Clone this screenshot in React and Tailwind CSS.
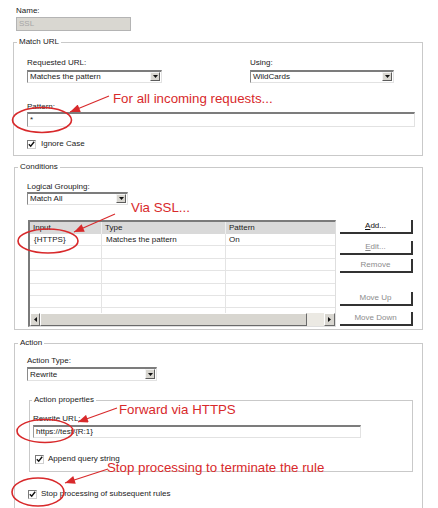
import React from "react";

const RED = "#d8292b";

const Label = ({ children, className = "" }) => (
  <div className={`leading-[10px] whitespace-nowrap ${className}`}>{children}</div>
);

const Select = ({ value, className = "" }) => (
  <div
    className={`flex items-stretch border-t-2 border-l border-t-[#7c7c7c] border-l-[#8a8a8a] border-r border-b border-r-[#e2e2e2] border-b-[#e2e2e2] bg-white ${className}`}
  >
    <div className="flex flex-1 items-center pl-[2px] leading-none whitespace-nowrap">{value}</div>
    <div className="mr-[1px] mb-[1px] flex w-[10px] items-center justify-center border border-t-[#f4f4f4] border-l-[#f4f4f4] border-b-[#5c5c5c] border-r-[#5c5c5c] bg-[#d8d6d0]">
      <svg width="5" height="3" viewBox="0 0 5 3">
        <path d="M0 0h5L2.5 3z" fill="#111" />
      </svg>
    </div>
  </div>
);

const Check = () => (
  <div className="flex h-[9px] w-[9px] items-center justify-center border border-t-[#7a7a7a] border-l-[#7a7a7a] border-b-[#cfcfcf] border-r-[#cfcfcf] bg-white">
    <svg width="7" height="7" viewBox="0 0 7 7">
      <path d="M0.8 3.2l1.9 2 3.5-4.4" stroke="#111" strokeWidth="1.4" fill="none" />
    </svg>
  </div>
);

const Btn = ({ children, dim, className = "" }) => (
  <div
    className={`flex h-[14px] w-[73px] items-center justify-center border-r-2 border-b-2 border-r-[#333] border-b-[#333] bg-white leading-none ${
      dim ? "text-[#8c8c8c]" : "text-[#111]"
    } ${className}`}
  >
    {children}
  </div>
);

const rows = [["{HTTPS}", "Matches the pattern", "On"], [], [], [], [], [], []];

const Table = () => (
  <div className="ml-[13px] flex h-[107px] w-[308px] flex-col border-t-2 border-l-2 border-t-[#7a7a7a] border-l-[#7a7a7a] border-r border-b border-r-[#dedede] border-b-[#dedede] bg-white">
    <div className="flex h-[12px] shrink-0 bg-[#d9d9d9] leading-[12px]">
      <div className="w-[72px] border-r border-[#efefef] pl-[3px]">Input</div>
      <div className="w-[124px] border-r border-[#efefef] pl-[3px]">Type</div>
      <div className="flex-1 pl-[3px]">Pattern</div>
    </div>
    <div className="flex-1 overflow-hidden">
      {rows.map((r, i) => (
        <div key={i} className="flex h-[12.4px] border-b border-[#e4e4e4] leading-[12px]">
          <div className="w-[72px] border-r border-[#e4e4e4] pl-[4px]">{r[0]}</div>
          <div className="w-[124px] border-r border-[#e4e4e4] pl-[4px]">{r[1]}</div>
          <div className="flex-1 pl-[3px]">{r[2]}</div>
        </div>
      ))}
    </div>
    <div className="flex h-[13px] shrink-0 bg-[#ebe9e3]">
      <div className="flex w-[10px] items-center justify-center border border-t-white border-l-white border-b-[#6a6a6a] border-r-[#6a6a6a] bg-[#d8d6d0]">
        <svg width="3" height="5" viewBox="0 0 3 5">
          <path d="M3 0v5L0 2.5z" fill="#111" />
        </svg>
      </div>
      <div className="w-[267px] border border-t-white border-l-white border-b-[#6a6a6a] border-r-[#6a6a6a] bg-[#d8d6d0]" />
      <div className="flex-1" />
      <div className="flex w-[11px] items-center justify-center border border-t-white border-l-white border-b-[#6a6a6a] border-r-[#6a6a6a] bg-[#d8d6d0]">
        <svg width="3" height="5" viewBox="0 0 3 5">
          <path d="M0 0v5L3 2.5z" fill="#111" />
        </svg>
      </div>
    </div>
  </div>
);

const Note = ({ children, className }) => (
  <span className={`absolute whitespace-nowrap text-[13.3px] leading-[14px] text-[#d8292b] ${className}`}>
    {children}
  </span>
);

export default function App() {
  return (
    <div className="relative h-[508px] w-[438px] overflow-hidden bg-white font-['Liberation_Sans',Arial,sans-serif] text-[8px] text-[#1a1a1a]">
      <div className="ml-[16px] pt-[6px]">
        <Label>Name:</Label>
        <div className="mt-[1px] flex h-[14px] w-[115px] items-center border border-[#b4b4b4] bg-[#d9d7d1] pl-[2px] text-[#a6a6a6]">
          SSL
        </div>
      </div>

      {/* Match URL */}
      <fieldset className="ml-[13px] mt-[6px] w-[410px] border border-[#c9c9c9] pb-[6px]">
        <legend className="ml-[3px] px-[2px] leading-[10px]">Match URL</legend>
        <div className="mt-[11px] flex">
          <div className="ml-[13px] w-[135px]">
            <Label>Requested URL:</Label>
            <Select value="Matches the pattern" className="mt-[2px] h-[13px] w-[135px]" />
          </div>
          <div className="ml-[88px] w-[144px]">
            <Label>Using:</Label>
            <Select value="WildCards" className="mt-[2px] h-[13px] w-[144px]" />
          </div>
        </div>
        <Label className="ml-[13px] mt-[19px]">Pattern:</Label>
        <div className="ml-[13px] flex h-[15px] w-[388px] items-center border-t-2 border-l border-t-[#7c7c7c] border-l-[#9a9a9a] border-r border-b border-r-[#e2e2e2] border-b-[#e2e2e2] pl-[2px]">
          *
        </div>
        <div className="ml-[13px] mt-[12px] flex h-[10px] items-center gap-[5px]">
          <Check />
          <span>Ignore Case</span>
        </div>
      </fieldset>

      {/* Conditions */}
      <fieldset className="ml-[14px] mt-[6px] w-[409px] border border-[#c9c9c9] pb-[2px]">
        <legend className="ml-[3px] px-[2px] leading-[10px]">Conditions</legend>
        <Label className="ml-[12px] mt-[10px]">Logical Grouping:</Label>
        <Select value="Match All" className="ml-[12px] h-[13px] w-[101px]" />
        <div className="mt-[15px] flex">
          <Table />
          <div className="ml-[4px] flex flex-col">
            <Btn>
              <span className="underline">A</span>dd...
            </Btn>
            <Btn dim className="mt-[7px]">
              <span className="underline">E</span>dit...
            </Btn>
            <Btn dim className="mt-[4px]">Remove</Btn>
            <Btn dim className="mt-[19px]">Move Up</Btn>
            <Btn dim className="mt-[6px]">Move Down</Btn>
          </div>
        </div>
      </fieldset>

      {/* Action */}
      <fieldset className="ml-[14px] mt-[8px] w-[409px] border border-[#c9c9c9] pb-[30px]">
        <legend className="ml-[3px] px-[2px] leading-[10px]">Action</legend>
        <Label className="ml-[12px] mt-[8px]">Action Type:</Label>
        <Select value="Rewrite" className="ml-[12px] mt-[1px] h-[14px] w-[130px]" />
        <fieldset className="ml-[14px] mt-[14px] w-[384px] border border-[#c9c9c9] pb-[7px]">
          <legend className="ml-[2px] px-[2px] leading-[10px]">Action properties</legend>
          <Label className="ml-[3px] mt-[9px]">Rewrite URL:</Label>
          <div className="ml-[3px] mt-[1px] flex h-[13px] w-[328px] items-center border-t-2 border-l border-t-[#7c7c7c] border-l-[#9a9a9a] border-r border-b border-r-[#e2e2e2] border-b-[#e2e2e2] pl-[2px]">
            https://test/{"{R:1}"}
          </div>
          <div className="ml-[5px] mt-[16px] flex h-[10px] items-center gap-[4px]">
            <Check />
            <span>Append query string</span>
          </div>
        </fieldset>
        <div className="ml-[13px] mt-[17px] flex h-[10px] items-center gap-[4px]">
          <Check />
          <span>Stop processing of subsequent rules</span>
        </div>
      </fieldset>

      {/* annotations */}
      <svg className="pointer-events-none absolute inset-0" width="438" height="508" viewBox="0 0 438 508">
        <defs>
          <marker
            id="head"
            viewBox="0 0 10 8"
            refX="10"
            refY="4"
            markerWidth="11"
            markerHeight="8"
            markerUnits="userSpaceOnUse"
            orient="auto"
          >
            <path d="M0 0L10 4L0 8z" fill={RED} />
          </marker>
        </defs>
        <g fill="none" stroke={RED}>
          <ellipse cx="42" cy="120" rx="29.5" ry="12.5" strokeWidth="1.6" />
          <ellipse cx="48" cy="241" rx="30" ry="12" strokeWidth="1.6" />
          <ellipse cx="45" cy="431" rx="28" ry="11.5" strokeWidth="1.6" />
          <ellipse cx="38" cy="492" rx="26" ry="14" strokeWidth="1.6" />
          <line x1="109" y1="96" x2="70" y2="112" strokeWidth="1.1" markerEnd="url(#head)" />
          <line x1="115" y1="214" x2="74" y2="232" strokeWidth="1.1" markerEnd="url(#head)" />
          <line x1="117" y1="408" x2="78" y2="422" strokeWidth="1.1" markerEnd="url(#head)" />
          <line x1="108" y1="469" x2="65" y2="483" strokeWidth="1.1" markerEnd="url(#head)" />
        </g>
      </svg>
      <Note className="left-[113px] top-[92px]">For all incoming requests...</Note>
      <Note className="left-[131px] top-[201px]">Via SSL...</Note>
      <Note className="left-[119px] top-[403px]">Forward via HTTPS</Note>
      <Note className="left-[107px] top-[461px]">Stop processing to terminate the rule</Note>
    </div>
  );
}
